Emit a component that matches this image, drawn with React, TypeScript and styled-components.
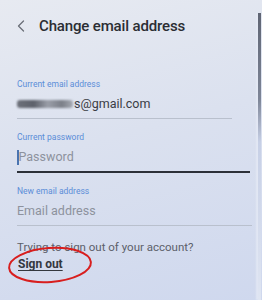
import React from "react";
import styled, { createGlobalStyle } from "styled-components";

const Global = createGlobalStyle`
  html, body { margin: 0; padding: 0; }
  body {
    width: 262px;
    height: 300px;
    overflow: hidden;
    font-family: Roboto, "Noto Sans", Arial, sans-serif;
    background: #dde3ef;
  }
`;

const Frame = styled.div`
  display: flex;
  width: 262px;
  height: 300px;
  background: linear-gradient(165deg, #e7eaf1 0%, #dbe1ef 45%, #cfd8ee 100%);
`;

const Screen = styled.div`
  position: relative;
  flex: 1;
  display: flex;
  flex-direction: column;
  padding: 0 0 0 17px;
`;

const Edge = styled.div`
  width: 3px;
  margin-top: 13px;
  margin-right: 1px;
  background: linear-gradient(180deg, #5f6574 0%, #7d8597 30%, #c7d0e6 45%, #dfe5f2 100%);
  box-shadow: -2px 0 2px rgba(230, 235, 245, 0.8);
`;

const Header = styled.div`
  display: flex;
  align-items: center;
  height: 24px;
  margin-top: 14px;
  gap: 14px;
`;

const Back = styled.svg`
  width: 8px;
  height: 12px;
  flex: none;
`;

const Title = styled.h1`
  margin: 0;
  font-size: 15px;
  font-weight: 500;
  color: #2b2d33;
  letter-spacing: -0.15px;
`;

const Field = styled.div<{ $top: number; $lineRight: number; $active?: boolean }>`
  display: flex;
  flex-direction: column;
  margin-top: ${(p) => p.$top}px;
  margin-right: ${(p) => p.$lineRight}px;
  border-bottom: ${(p) => (p.$active ? "2px solid #2c3038" : "1px solid #b9c0cd")};
`;

const Label = styled.div`
  font-size: 8.5px;
  color: #5b8dd8;
  line-height: 10px;
`;

const Value = styled.div<{ $placeholder?: boolean }>`
  display: flex;
  align-items: center;
  font-size: 12.5px;
  line-height: 16px;
  height: 16px;
  margin-top: 7px;
  margin-bottom: 6px;
  color: ${(p) => (p.$placeholder ? "#8d929d" : "#3a3d45")};
`;

const Blur = styled.span`
  display: inline-block;
  width: 56px;
  height: 8px;
  margin-right: 1px;
  background: linear-gradient(90deg, #6d717a 0%, #5d616b 30%, #9a9ea8 55%, #7b7f88 80%, #a7abb4 100%);
  filter: blur(1.2px);
  border-radius: 3px;
`;

const Cursor = styled.span`
  display: inline-block;
  width: 1.5px;
  height: 15px;
  background: #4a74b0;
`;

const Prompt = styled.div`
  margin-top: 14px;
  font-size: 11.5px;
  color: #5c606a;
  line-height: 14px;
`;

const SignOut = styled.a`
  margin-top: 3px;
  margin-left: 1px;
  font-size: 12px;
  font-weight: 700;
  color: #34373e;
  text-decoration: underline;
  text-underline-offset: 2px;
  line-height: 14px;
  align-self: flex-start;
`;

const Annotation = styled.svg`
  position: absolute;
  left: 6px;
  top: 245px;
  width: 90px;
  height: 42px;
  pointer-events: none;
`;

export default function App() {
  return (
    <>
      <Global />
      <Frame>
        <Screen>
          <Header>
            <Back viewBox="0 0 8 12">
              <path d="M6.5 1 L1.5 6 L6.5 11" fill="none" stroke="#6b6f78" strokeWidth="1.3" strokeLinecap="round" strokeLinejoin="round" />
            </Back>
            <Title>Change email address</Title>
          </Header>

          <Field $top={41} $lineRight={26}>
            <Label>Current email address</Label>
            <Value>
              <Blur />
              <span>s@gmail.com</span>
            </Value>
          </Field>

          <Field $top={13} $lineRight={8} $active>
            <Label>Current password</Label>
            <Value $placeholder>
              <Cursor />
              <span>Password</span>
            </Value>
          </Field>

          <Field $top={13} $lineRight={6}>
            <Label>New email address</Label>
            <Value $placeholder>Email address</Value>
          </Field>

          <Prompt>Trying to sign out of your account?</Prompt>
          <SignOut>Sign out</SignOut>

          <Annotation viewBox="0 0 90 42">
            <ellipse cx="44" cy="20" rx="41" ry="17" fill="none" stroke="#d81e1e" strokeWidth="2" transform="rotate(-4 44 20)" />
          </Annotation>
        </Screen>
        <Edge />
      </Frame>
    </>
  );
}
